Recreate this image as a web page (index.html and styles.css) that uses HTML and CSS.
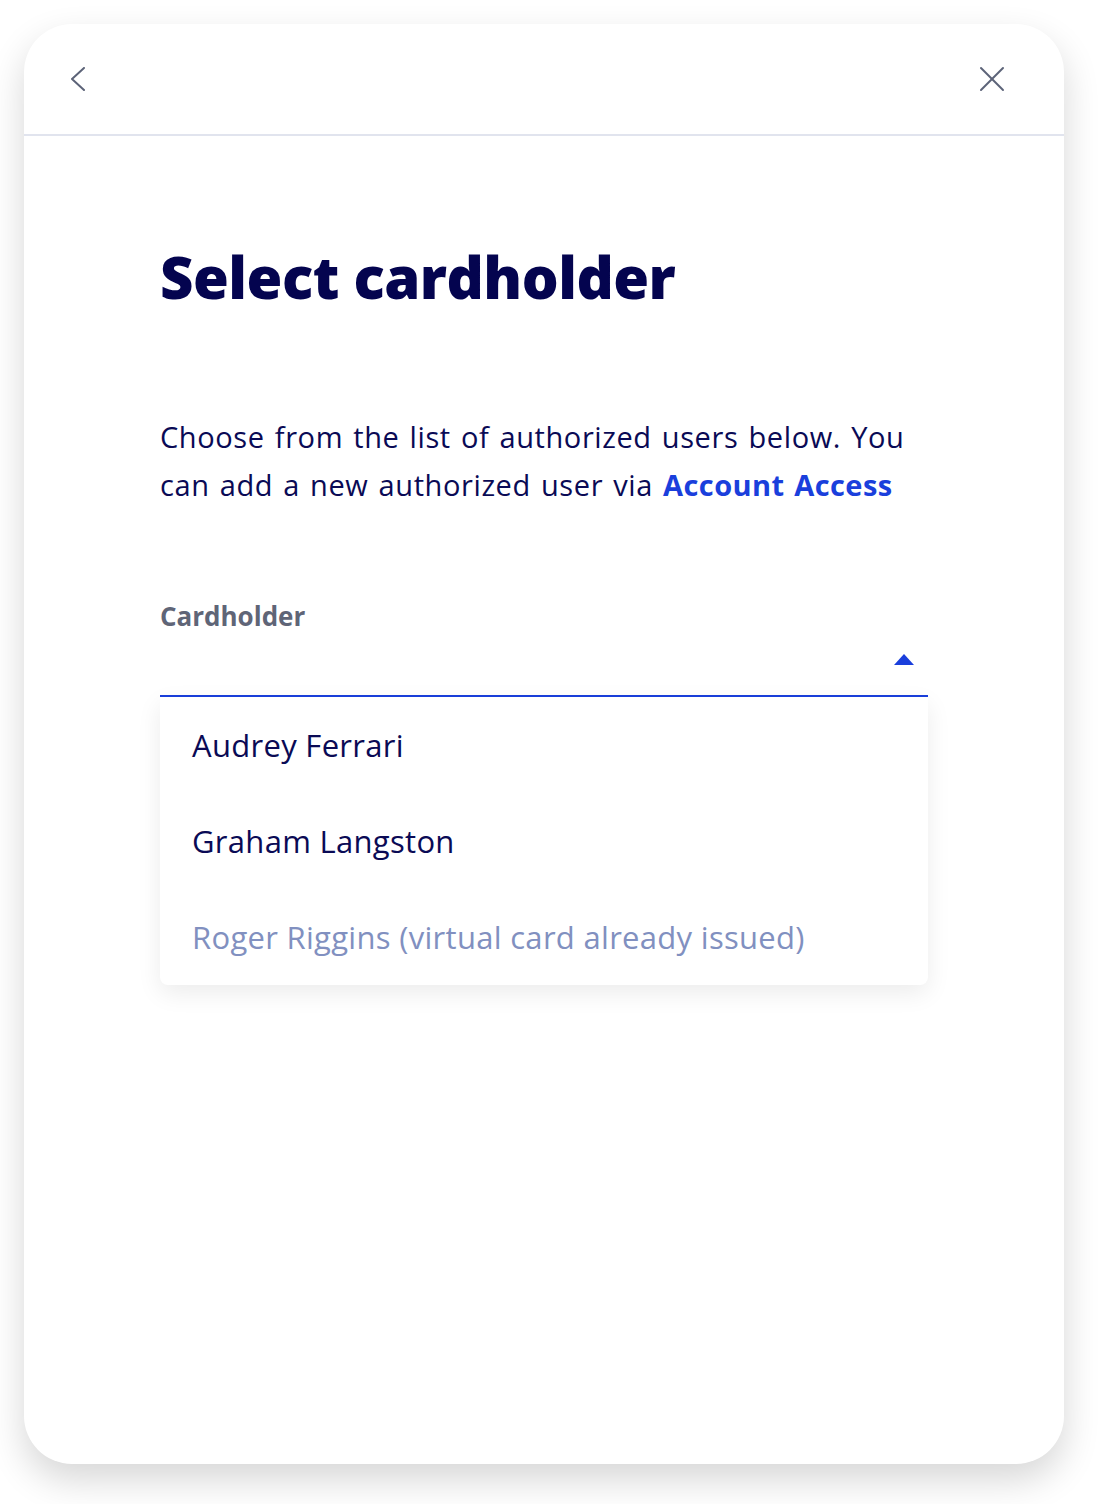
FILE: index.html
```html
<!DOCTYPE html>
<html>
<head>
    <title>Select cardholder</title>
    <link rel="stylesheet" href="styles.css">
</head>
<body>
    <div class="modal">
        <div class="modal-header">
            <button class="icon-btn" aria-label="Back">
                <svg width="24" height="24" viewBox="0 0 24 24" fill="none" stroke="#5c6378" stroke-width="2" stroke-linecap="round" stroke-linejoin="round">
                    <polyline points="17,1 5,12 17,23"></polyline>
                </svg>
            </button>
            <button class="icon-btn" aria-label="Close">
                <svg width="26" height="26" viewBox="0 0 26 26" fill="none" stroke="#5c6378" stroke-width="2" stroke-linecap="round">
                    <line x1="2" y1="2" x2="24" y2="24"></line>
                    <line x1="24" y1="2" x2="2" y2="24"></line>
                </svg>
            </button>
        </div>

        <div class="modal-body">
            <h1>Select cardholder</h1>
            <p class="intro">Choose from the list of authorized users below. You can add a new authorized user via <a href="#">Account Access</a></p>

            <div class="field">
                <label>Cardholder</label>
                <div class="select">
                    <span class="caret"></span>
                </div>
                <ul class="options">
                    <li>Audrey Ferrari</li>
                    <li>Graham Langston</li>
                    <li class="disabled">Roger Riggins (virtual card already issued)</li>
                </ul>
            </div>
        </div>
    </div>
</body>
</html>
```

FILE: styles.css
```css
body {
    margin: 0;
    background-color: white;
    font-family: "Open Sans", "Noto Sans", sans-serif;
    color: #0a0a55;
}
.modal {
    margin: 24px 40px 40px 24px;
    width: 1040px;
    height: 1440px;
    background-color: white;
    border-radius: 48px;
    box-shadow: 0 16px 36px rgba(0, 0, 0, 0.16);
    overflow: hidden;
}
.modal-header {
    height: 110px;
    border-bottom: 2px solid #e1e4ee;
    display: flex;
    justify-content: space-between;
    align-items: center;
    padding: 0 59px 0 42px;
}
.icon-btn {
    background: none;
    border: none;
    padding: 0;
    width: 26px;
    height: 26px;
    display: flex;
    align-items: center;
    justify-content: center;
}
.modal-body {
    padding: 101px 136px 0 136px;
}
h1 {
    margin: 0;
    font-size: 58px;
    line-height: 80px;
    font-weight: 800;
    color: #04044f;
    letter-spacing: -0.5px;
}
.intro {
    margin: 96px 0 0 0;
    font-size: 29px;
    line-height: 48px;
    letter-spacing: 0.6px;
    word-spacing: 2px;
    color: #0a0a55;
}
.intro a {
    color: #1a3fdc;
    font-weight: 700;
    letter-spacing: 0.4px;
    text-decoration: none;
}
.field {
    margin-top: 91px;
}
label {
    display: block;
    font-size: 26px;
    font-weight: 700;
    color: #5f6577;
    line-height: 32px;
}
.select {
    height: 41px;
    border-bottom: 2px solid #1a3fdc;
    display: flex;
    justify-content: flex-end;
    align-items: flex-start;
    padding-right: 14px;
    padding-top: 22px;
}
.caret {
    width: 0;
    height: 0;
    border-left: 10px solid transparent;
    border-right: 10px solid transparent;
    border-bottom: 11px solid #1a3fdc;
}
.options {
    list-style: none;
    margin: 0;
    padding: 0;
    background-color: white;
    border-radius: 0 0 8px 8px;
    box-shadow: 0 8px 24px rgba(0, 0, 0, 0.08);
}
.options li {
    height: 96px;
    line-height: 96px;
    padding-left: 32px;
    font-size: 31px;
    letter-spacing: 0.3px;
    color: #0a0a55;
}
.options li.disabled {
    color: #8190c0;
}
```
